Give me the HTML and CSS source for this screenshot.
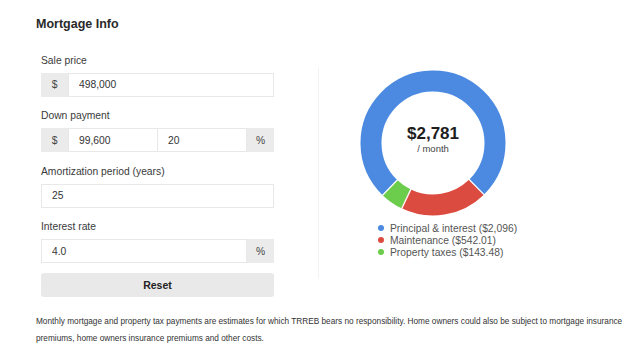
FILE: index.html
```html
<!DOCTYPE html>
<html lang="en">
<head>
    <meta charset="UTF-8">
    <meta name="viewport" content="width=device-width, initial-scale=1.0">
    <title>Mortgage Info</title>
    <link rel="stylesheet" href="styles.css">
</head>
<body>
    <div class="page">
        <h1 class="title">Mortgage Info</h1>

        <div class="calc">
            <form class="fields">
                <div class="field">
                    <label>Sale price</label>
                    <div class="group">
                        <span class="addon">$</span>
                        <input type="text" value="498,000">
                    </div>
                </div>

                <div class="field">
                    <label>Down payment</label>
                    <div class="group">
                        <span class="addon">$</span>
                        <input type="text" value="99,600">
                        <input type="text" value="20">
                        <span class="addon">%</span>
                    </div>
                </div>

                <div class="field">
                    <label>Amortization period (years)</label>
                    <div class="group">
                        <input type="text" value="25">
                    </div>
                </div>

                <div class="field last">
                    <label>Interest rate</label>
                    <div class="group">
                        <input type="text" value="4.0">
                        <span class="addon">%</span>
                    </div>
                </div>

                <button type="button" class="reset">Reset</button>
            </form>

            <div class="chart">
                <div class="donut">
                    <svg viewBox="0 0 146 146" width="146" height="146">
                        <g transform="rotate(134 73 73)" fill="none" stroke-width="21">
                            <circle cx="73" cy="73" r="62" stroke="#4b8ae0" stroke-dasharray="293.6 389.6"/>
                            <circle cx="73" cy="73" r="62" stroke="#dc4b3f" stroke-dasharray="75.93 389.6" stroke-dashoffset="-293.6"/>
                            <circle cx="73" cy="73" r="62" stroke="#6ccd4c" stroke-dasharray="20.1 389.6" stroke-dashoffset="-369.53"/>
                        </g>
                        <g stroke="#ffffff" stroke-width="1.2">
                            <line x1="73" y1="0" x2="73" y2="23" transform="rotate(135.3 73 73)"/>
                            <line x1="73" y1="0" x2="73" y2="23" transform="rotate(205.5 73 73)"/>
                            <line x1="73" y1="0" x2="73" y2="23" transform="rotate(224 73 73)"/>
                        </g>
                    </svg>
                    <div class="total">
                        <div class="amount">$2,781</div>
                        <div class="per">/ month</div>
                    </div>
                </div>
                <ul class="legend">
                    <li><span class="dot blue"></span>Principal &amp; interest ($2,096)</li>
                    <li><span class="dot red"></span>Maintenance ($542.01)</li>
                    <li><span class="dot green"></span>Property taxes ($143.48)</li>
                </ul>
            </div>
        </div>

        <p class="note">Monthly mortgage and property tax payments are estimates for which TRREB bears no responsibility. Home owners could also be subject to mortgage insurance premiums, home owners insurance premiums and other costs.</p>
    </div>
</body>
</html>
```

FILE: styles.css
```css
body {
    margin: 0;
    font-family: 'Liberation Sans', Arial, sans-serif;
    color: #333333;
    background: #ffffff;
}
.page {
    padding: 12px 10px 0 36px;
}
.title {
    margin: 0;
    font-size: 12.5px;
    line-height: 24px;
    font-weight: bold;
    color: #2a2a2a;
}
.calc {
    display: flex;
    margin-top: 17.5px;
}
.fields {
    width: 233px;
    margin: 0 0 0 5px;
}
.field {
    margin-bottom: 12.5px;
}
.field.last {
    margin-bottom: 10px;
}
label {
    display: block;
    font-size: 10.3px;
    line-height: 14px;
    margin-bottom: 5px;
    color: #3a3a3a;
}
.group {
    display: flex;
    height: 24px;
}
.addon {
    width: 27px;
    flex: none;
    display: flex;
    align-items: center;
    justify-content: center;
    background: #ebebeb;
    font-size: 10.3px;
    color: #444444;
}
.group input {
    flex: 1;
    min-width: 0;
    margin: 0;
    padding: 0 10px;
    border: 1px solid #e8e8e8;
    font-family: inherit;
    font-size: 10.3px;
    color: #333333;
    background: #ffffff;
    outline: none;
}
.group input + input {
    border-left: none;
}
.reset {
    display: block;
    width: 100%;
    height: 24px;
    border: none;
    border-radius: 3px;
    background: #e9e9e9;
    font-family: inherit;
    font-size: 10.5px;
    font-weight: bold;
    color: #222222;
}
.chart {
    margin: 14px 0 18px 44px;
    padding: 2px 0 0 41px;
    border-left: 1px solid #f2f2f2;
}
.donut {
    position: relative;
    width: 146px;
    height: 146px;
}
.donut svg {
    display: block;
}
.total {
    position: absolute;
    top: 0;
    left: 0;
    width: 100%;
    height: 100%;
    display: flex;
    flex-direction: column;
    align-items: center;
    justify-content: center;
    padding-bottom: 6px;
    box-sizing: border-box;
}
.amount {
    font-size: 17px;
    line-height: 19px;
    font-weight: bold;
    color: #1e1e1e;
}
.per {
    font-size: 9.5px;
    line-height: 12px;
    color: #444444;
}
.legend {
    list-style: none;
    margin: 7px 0 0 18px;
    padding: 0;
    font-size: 10.3px;
    line-height: 12px;
    color: #555555;
}
.dot {
    display: inline-block;
    width: 6px;
    height: 6px;
    border-radius: 50%;
    margin-right: 6px;
    vertical-align: 1px;
}
.blue { background: #4b8ae0; }
.red { background: #dc4b3f; }
.green { background: #6ccd4c; }
.note {
    margin: 15.5px 0 0;
    font-size: 8.25px;
    line-height: 17px;
    color: #333333;
}
```
